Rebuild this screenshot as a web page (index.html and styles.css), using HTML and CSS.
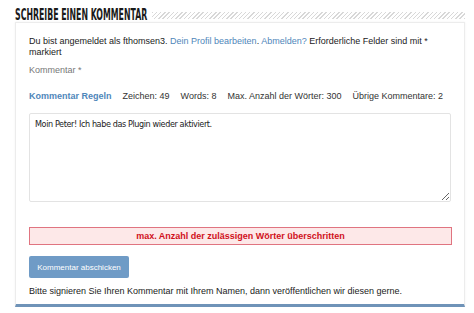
FILE: index.html
```html
<!DOCTYPE html>
<html>
	<head>
		<title>Schreibe einen Kommentar</title>
		<link rel="stylesheet" href="styles.css">
	</head>
	<body>
		<div class="respond">
			<h3 class="title"><span>Schreibe einen Kommentar</span></h3>
			<form class="box">
				<p class="logged">
					Du bist angemeldet als fthomsen3. <a href="#">Dein Profil bearbeiten</a>. <a href="#">Abmelden?</a> Erforderliche Felder sind mit * markiert
				</p>
				<label class="field-label">Kommentar *</label>
				<div class="stats">
					<a href="#" class="rules">Kommentar Regeln</a>
					<span>Zeichen: 49</span>
					<span>Words: 8</span>
					<span>Max. Anzahl der Wörter: 300</span>
					<span>Übrige Kommentare: 2</span>
				</div>
				<textarea class="comment">Moin Peter! Ich habe das Plugin wieder aktiviert.</textarea>
				<div class="error">max. Anzahl der zulässigen Wörter überschritten</div>
				<button type="submit" class="submit">Kommentar abschicken</button>
				<p class="note">Bitte signieren Sie Ihren Kommentar mit Ihrem Namen, dann veröffentlichen wir diesen gerne.</p>
			</form>
		</div>
	</body>
</html>
```

FILE: styles.css
```css
body {
	margin: 0;
	background: #fff;
	font-family: "Liberation Sans", Arial, sans-serif;
	font-size: 9px;
	color: #222;
}
a {
	color: #4f86ba;
	text-decoration: none;
}

.respond {
	width: 450px;
	margin: 0 0 0 15px;
	padding-top: 7px;
}
.title {
	display: flex;
	align-items: center;
	gap: 4px;
	margin: 0;
	height: 15px;
	font-family: "DejaVu Sans Condensed", "DejaVu Sans", sans-serif;
	font-weight: bold;
	font-size: 15px;
	text-transform: uppercase;
	color: #1a1a1a;
}
.title span {
	flex: 0 0 133px;
	min-width: 0;
	white-space: nowrap;
	transform: scaleX(0.58);
	transform-origin: 0 50%;
}
.title:after {
	content: "";
	flex: 1;
	height: 7px;
	margin-top: 1px;
	background: repeating-linear-gradient(135deg, #d8d8d8 0, #d8d8d8 1px, transparent 1px, transparent 3px);
}

.box {
	margin-top: 0;
	border: 1px solid #ececec;
	border-bottom: 3px solid #6f93b8;
	box-shadow: 0 0 2px rgba(0, 0, 0, 0.06);
	padding: 13px 13px 7px 13px;
}
.logged {
	margin: 0;
	line-height: 11px;
}
.field-label {
	display: block;
	margin-top: 6px;
	line-height: 12px;
	color: #777;
}
.stats {
	display: flex;
	gap: 11px;
	margin-top: 14px;
	line-height: 12px;
	white-space: nowrap;
	color: #333;
}
.stats .rules {
	font-weight: bold;
}
.comment {
	display: block;
	box-sizing: border-box;
	width: 422px;
	height: 89px;
	margin-top: 11px;
	padding: 5px 5px;
	border: 1px solid #e3e3e3;
	border-radius: 2px;
	font-family: "DejaVu Sans Condensed", "DejaVu Sans", sans-serif;
	font-size: 9px;
	letter-spacing: -0.4px;
	color: #222;
	resize: vertical;
}
.error {
	box-sizing: border-box;
	width: 423px;
	height: 18px;
	margin-top: 25px;
	border: 1px solid #e07480;
	background: #fde8e8;
	color: #d0111b;
	font-weight: bold;
	font-size: 9px;
	text-align: center;
	line-height: 16px;
}
.submit {
	display: block;
	margin-top: 11px;
	width: 100px;
	height: 22px;
	border: 0;
	border-radius: 2px;
	background: #6f9bc6;
	color: #fff;
	font-family: "Liberation Sans", Arial, sans-serif;
	font-size: 8px;
	white-space: nowrap;
	padding: 0;
}
.note {
	margin: 7px 0 0;
	line-height: 12px;
}
```
